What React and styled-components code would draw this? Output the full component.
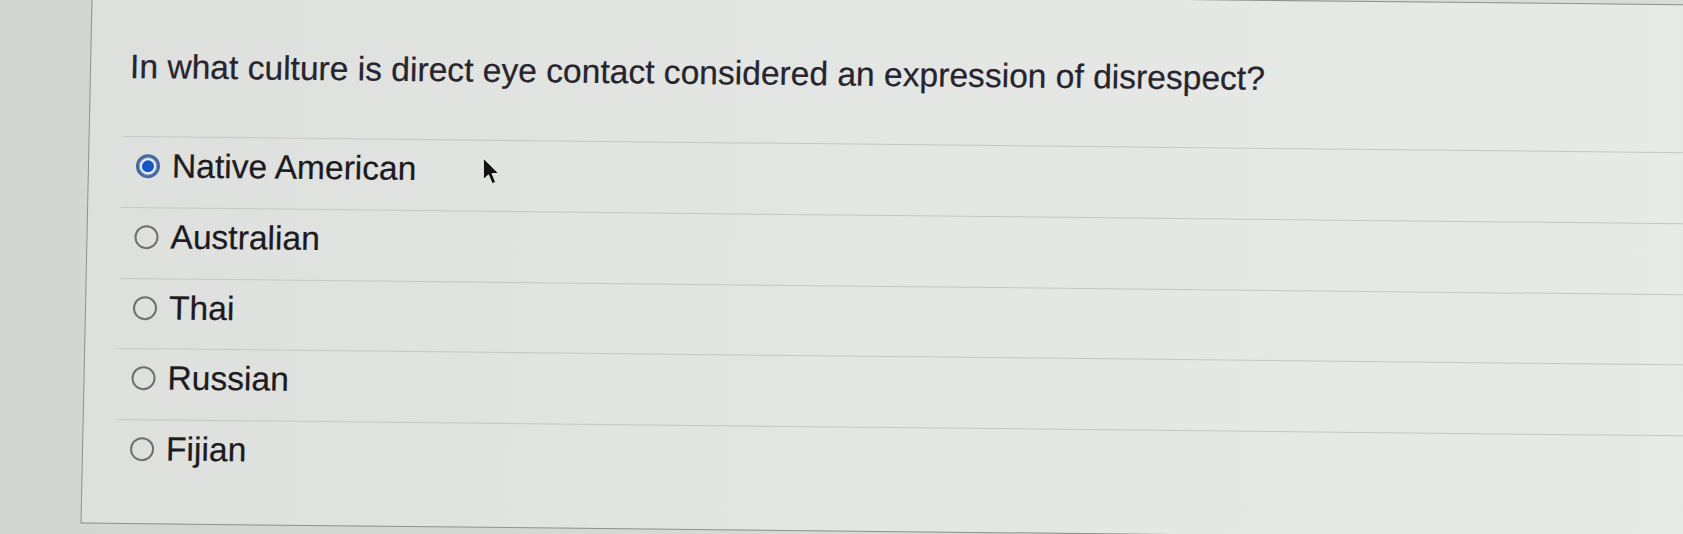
import React from "react";
import styled, { createGlobalStyle } from "styled-components";

const options = ["Native American", "Australian", "Thai", "Russian", "Fijian"];

const GlobalStyle = createGlobalStyle`
  html, body {
    margin: 0;
    padding: 0;
    background: #d4d7d4;
    overflow: hidden;
  }
  body {
    font-family: "Liberation Sans", Arial, sans-serif;
  }
`;

const Page = styled.div`
  position: relative;
  display: flex;
  width: 100vw;
  height: 534px;
  padding-left: 88px;
  box-sizing: border-box;
  overflow: hidden;
  background: linear-gradient(90deg, #d3d6d3 0%, #d9dcd9 100%);
`;

const Panel = styled.section`
  flex: none;
  width: calc(100% + 60px);
  height: 536px;
  margin-top: -12px;
  box-sizing: border-box;
  border: 1px solid #8f928f;
  background: linear-gradient(90deg, #dee0dd 0%, #e4e6e3 45%, #e8eae7 100%);
  padding: 58px 0 0 33px;
  transform: skew(-1.2deg, 0.6deg);
  transform-origin: 42px 177px;
`;

const Question = styled.h2`
  margin: 0 0 49px 6px;
  font-size: 33.6px;
  line-height: 40px;
  font-weight: 400;
  color: #28242e;
  -webkit-text-stroke: 0.25px #28242e;
  white-space: nowrap;
`;

const OptionList = styled.div`
  display: flex;
  flex-direction: column;
`;

const OptionRow = styled.label`
  display: flex;
  align-items: center;
  gap: 12px;
  height: 40px;
  padding: 9px 0 20.75px 14px;
  border-top: 1px solid #c4c7c4;
`;

const Radio = styled.span`
  position: relative;
  flex: none;
  width: 24px;
  height: 24px;
  box-sizing: border-box;
  border-radius: 50%;
  border: ${({ $checked }) => ($checked ? "3px solid #46679f" : "2px solid #6f716f")};
  background: ${({ $checked }) => ($checked ? "#eef1f5" : "transparent")};
  box-shadow: ${({ $checked }) => ($checked ? "inset 0 0 0 1px #8fa6d0" : "none")};

  &::after {
    content: "";
    display: ${({ $checked }) => ($checked ? "block" : "none")};
    position: absolute;
    left: 50%;
    top: 50%;
    width: 12px;
    height: 12px;
    margin: -6px 0 0 -6px;
    border-radius: 50%;
    background: #1756c4;
  }
`;

const OptionText = styled.span`
  font-size: 33.6px;
  line-height: 40px;
  color: #1d1a22;
  -webkit-text-stroke: 0.25px #1d1a22;
  white-space: nowrap;
`;

const Pointer = styled.svg`
  position: absolute;
  left: 482px;
  top: 157px;
  width: 19px;
  height: 29px;
`;

const App = () => {
  return (
    <>
      <GlobalStyle />
      <Page>
        <Panel>
          <Question>
            In what culture is direct eye contact considered an expression of
            disrespect?
          </Question>
          <OptionList>
            {options.map((label, i) => (
              <OptionRow key={label}>
                <Radio $checked={i === 0} />
                <OptionText>{label}</OptionText>
              </OptionRow>
            ))}
          </OptionList>
        </Panel>
        <Pointer viewBox="0 0 16 25">
          <path
            d="M1 1 L1 19.5 L5.4 15.4 L8.6 23 L11.6 21.7 L8.5 14.3 L14.3 14.3 Z"
            fill="#141414"
            stroke="#f4f4f4"
            strokeWidth="0.8"
            strokeLinejoin="round"
          />
        </Pointer>
      </Page>
    </>
  );
};

export default App;
